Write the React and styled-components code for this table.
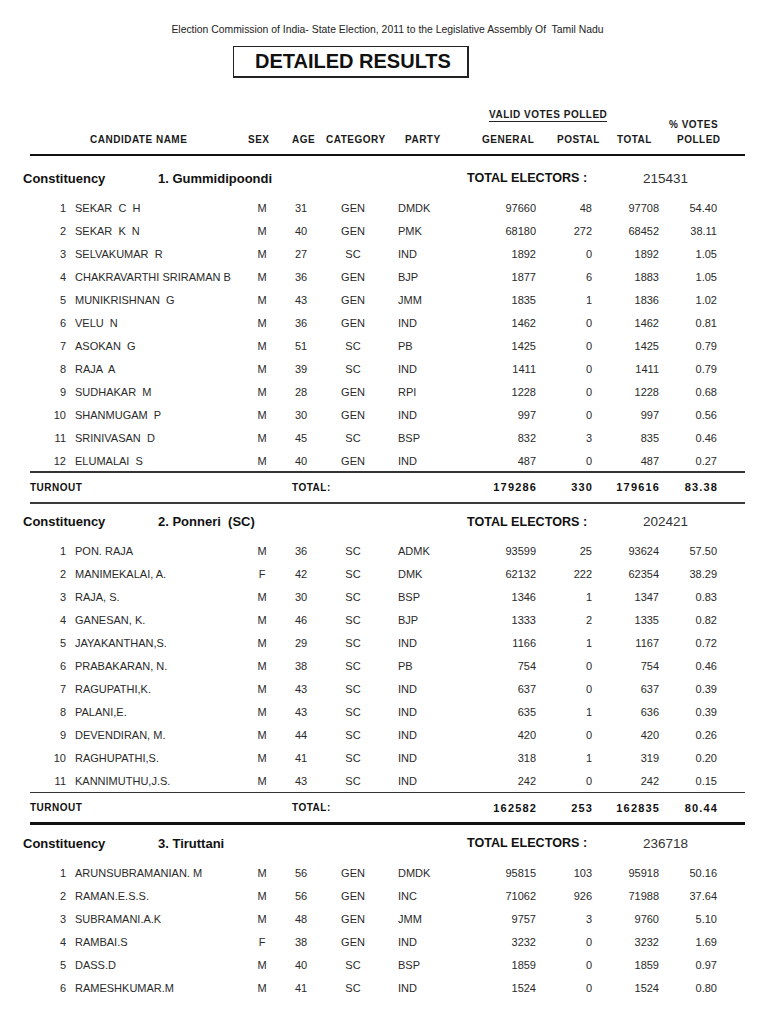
import React from 'react'
import styled, { createGlobalStyle } from 'styled-components'

const Global = createGlobalStyle`
    body {
        margin: 0;
        background: #fff;
        font-family: 'Liberation Sans', Arial, sans-serif;
        color: #222;
    }
`

const DATA_COLS = '36px 174px 44px 34px 70px 82px 66px 56px 67px 58px 28px'
const HEAD_COLS = '60px 158px 44px 34px 79px 77px 75px 60px 60px 68px'

const sections = [
    {
        no: '1. Gummidipoondi',
        electors: '215431',
        rows: [
            ['1', 'SEKAR  C  H', 'M', '31', 'GEN', 'DMDK', '97660', '48', '97708', '54.40'],
            ['2', 'SEKAR  K  N', 'M', '40', 'GEN', 'PMK', '68180', '272', '68452', '38.11'],
            ['3', 'SELVAKUMAR  R', 'M', '27', 'SC', 'IND', '1892', '0', '1892', '1.05'],
            ['4', 'CHAKRAVARTHI SRIRAMAN B', 'M', '36', 'GEN', 'BJP', '1877', '6', '1883', '1.05'],
            ['5', 'MUNIKRISHNAN  G', 'M', '43', 'GEN', 'JMM', '1835', '1', '1836', '1.02'],
            ['6', 'VELU  N', 'M', '36', 'GEN', 'IND', '1462', '0', '1462', '0.81'],
            ['7', 'ASOKAN  G', 'M', '51', 'SC', 'PB', '1425', '0', '1425', '0.79'],
            ['8', 'RAJA  A', 'M', '39', 'SC', 'IND', '1411', '0', '1411', '0.79'],
            ['9', 'SUDHAKAR  M', 'M', '28', 'GEN', 'RPI', '1228', '0', '1228', '0.68'],
            ['10', 'SHANMUGAM  P', 'M', '30', 'GEN', 'IND', '997', '0', '997', '0.56'],
            ['11', 'SRINIVASAN  D', 'M', '45', 'SC', 'BSP', '832', '3', '835', '0.46'],
            ['12', 'ELUMALAI  S', 'M', '40', 'GEN', 'IND', '487', '0', '487', '0.27'],
        ],
        total: ['179286', '330', '179616', '83.38'],
        close: { w: 2, c: '#3a3a3a' },
    },
    {
        no: '2. Ponneri  (SC)',
        electors: '202421',
        rows: [
            ['1', 'PON. RAJA', 'M', '36', 'SC', 'ADMK', '93599', '25', '93624', '57.50'],
            ['2', 'MANIMEKALAI, A.', 'F', '42', 'SC', 'DMK', '62132', '222', '62354', '38.29'],
            ['3', 'RAJA, S.', 'M', '30', 'SC', 'BSP', '1346', '1', '1347', '0.83'],
            ['4', 'GANESAN, K.', 'M', '46', 'SC', 'BJP', '1333', '2', '1335', '0.82'],
            ['5', 'JAYAKANTHAN,S.', 'M', '29', 'SC', 'IND', '1166', '1', '1167', '0.72'],
            ['6', 'PRABAKARAN, N.', 'M', '38', 'SC', 'PB', '754', '0', '754', '0.46'],
            ['7', 'RAGUPATHI,K.', 'M', '43', 'SC', 'IND', '637', '0', '637', '0.39'],
            ['8', 'PALANI,E.', 'M', '43', 'SC', 'IND', '635', '1', '636', '0.39'],
            ['9', 'DEVENDIRAN, M.', 'M', '44', 'SC', 'IND', '420', '0', '420', '0.26'],
            ['10', 'RAGHUPATHI,S.', 'M', '41', 'SC', 'IND', '318', '1', '319', '0.20'],
            ['11', 'KANNIMUTHU,J.S.', 'M', '43', 'SC', 'IND', '242', '0', '242', '0.15'],
        ],
        total: ['162582', '253', '162835', '80.44'],
        close: { w: 3, c: '#111' },
    },
    {
        no: '3. Tiruttani',
        electors: '236718',
        rows: [
            ['1', 'ARUNSUBRAMANIAN. M', 'M', '56', 'GEN', 'DMDK', '95815', '103', '95918', '50.16'],
            ['2', 'RAMAN.E.S.S.', 'M', '56', 'GEN', 'INC', '71062', '926', '71988', '37.64'],
            ['3', 'SUBRAMANI.A.K', 'M', '48', 'GEN', 'JMM', '9757', '3', '9760', '5.10'],
            ['4', 'RAMBAI.S', 'F', '38', 'GEN', 'IND', '3232', '0', '3232', '1.69'],
            ['5', 'DASS.D', 'M', '40', 'SC', 'BSP', '1859', '0', '1859', '0.97'],
            ['6', 'RAMESHKUMAR.M', 'M', '41', 'SC', 'IND', '1524', '0', '1524', '0.80'],
        ],
    },
]

// alignment of each data column
const ALIGN = ['right', 'left', 'center', 'center', 'center', 'left', 'right', 'right', 'right', 'right']

const App = () => (
    <Page>
        <Global />
        <Caption>Election Commission of India- State Election, 2011 to the Legislative Assembly Of  Tamil Nadu</Caption>
        <TitleBox>DETAILED RESULTS</TitleBox>

        <HeadGrid>
            <Valid>VALID VOTES POLLED</Valid>
            <PctTop>% VOTES</PctTop>
            <HeadLabel $col={2}>CANDIDATE NAME</HeadLabel>
            <HeadLabel $col={3}>SEX</HeadLabel>
            <HeadLabel $col={4}>AGE</HeadLabel>
            <HeadLabel $col={5}>CATEGORY</HeadLabel>
            <HeadLabel $col={6}>PARTY</HeadLabel>
            <HeadLabel $col={7}>GENERAL</HeadLabel>
            <HeadLabel $col={8}>POSTAL</HeadLabel>
            <HeadLabel $col={9}>TOTAL</HeadLabel>
            <HeadLabel $col={10}>POLLED</HeadLabel>
        </HeadGrid>
        <Rule $w={2} $c="#111" $mt={5} />

        {sections.map((s, i) => (
            <Section key={s.no}>
                <ConstRow $first={i === 0}>
                    <ConstText>Constituency</ConstText>
                    <ConstText>{s.no}</ConstText>
                    <Electors>TOTAL ELECTORS :</Electors>
                    <ElectorsValue>{s.electors}</ElectorsValue>
                </ConstRow>
                {s.rows.map((r) => (
                    <Row key={r[0]}>
                        {r.map((v, k) => (
                            <Cell key={k} $align={ALIGN[k]} $pl={k === 1 ? 9 : k === 5 ? 10 : 0}>
                                {v}
                            </Cell>
                        ))}
                    </Row>
                ))}
                {s.total && (
                    <>
                        <Rule $w={1.5} $c="#333" $mt={-1} />
                        <TurnoutRow>
                            <TurnLabel $col="1 / span 3">TURNOUT</TurnLabel>
                            <TurnLabel $col="4 / span 3" $pl={8}>TOTAL:</TurnLabel>
                            {s.total.map((v, k) => (
                                <TurnNum key={k} $col={7 + k}>{v}</TurnNum>
                            ))}
                        </TurnoutRow>
                        <Rule $w={s.close.w} $c={s.close.c} />
                    </>
                )}
            </Section>
        ))}
    </Page>
)

export default App

const Page = styled.div`
    width: 715px;
    padding: 24px 0 0 30px;
`

const Caption = styled.div`
    font-size: 10.4px;
    line-height: 12px;
    text-align: center;
    white-space: pre;
    color: #222;
`

const TitleBox = styled.div`
    width: fit-content;
    margin: 10px 0 0 203px;
    padding: 0 16px 0 21px;
    height: 29px;
    line-height: 29px;
    border: 1.5px solid #222;
    border-right-width: 2.5px;
    border-bottom-width: 2.5px;
    font-size: 20px;
    font-weight: bold;
    color: #111;
`

const HeadGrid = styled.div`
    display: grid;
    grid-template-columns: ${HEAD_COLS};
    grid-template-rows: 23px 18px;
    margin-top: 30px;
    font-size: 10px;
    font-weight: bold;
    letter-spacing: 0.5px;
    color: #1a1a1a;
`

const Valid = styled.span`
    grid-row: 1;
    grid-column: 7 / span 2;
    align-self: start;
    justify-self: start;
    margin: 1px 0 0 7px;
    line-height: 12px;
    white-space: nowrap;
    border-bottom: 1.5px solid #222;
`

const PctTop = styled.span`
    grid-row: 1;
    grid-column: 10;
    align-self: end;
    margin-left: -8px;
    line-height: 12px;
    white-space: nowrap;
`

const HeadLabel = styled.span`
    grid-row: 2;
    grid-column: ${(p) => p.$col};
    align-self: center;
    line-height: 12px;
    white-space: nowrap;
`

const Rule = styled.div`
    height: ${(p) => p.$w}px;
    margin-top: ${(p) => p.$mt || 0}px;
    background: ${(p) => p.$c};
`

const Section = styled.section``

const ConstRow = styled.div`
    display: grid;
    grid-template-columns: 135px 309px 176px auto;
    align-items: center;
    margin-left: -7px;
    height: ${(p) => (p.$first ? 40 : 36)}px;
    padding-top: ${(p) => (p.$first ? 4 : 0)}px;
    box-sizing: border-box;
`

const ConstText = styled.span`
    font-size: 13px;
    font-weight: bold;
    white-space: pre;
    color: #111;
`

const Electors = styled.span`
    font-size: 12.6px;
    font-weight: bold;
    color: #111;
`

const ElectorsValue = styled.span`
    font-size: 13.5px;
    color: #333;
`

const Row = styled.div`
    display: grid;
    grid-template-columns: ${DATA_COLS};
    height: 23px;
    align-items: center;
    font-size: 11px;
    color: #2a2a2a;
    white-space: pre;
`

const Cell = styled.span`
    text-align: ${(p) => p.$align};
    padding-left: ${(p) => p.$pl}px;
`

const TurnoutRow = styled.div`
    display: grid;
    grid-template-columns: ${DATA_COLS};
    height: 29px;
    align-items: center;
    font-weight: bold;
    color: #111;
`

const TurnLabel = styled.span`
    grid-column: ${(p) => p.$col};
    padding-left: ${(p) => p.$pl || 0}px;
    font-size: 10px;
    letter-spacing: 0.5px;
`

const TurnNum = styled.span`
    grid-column: ${(p) => p.$col};
    text-align: right;
    font-size: 11px;
    letter-spacing: 1.2px;
    margin-right: -1.2px;
`
